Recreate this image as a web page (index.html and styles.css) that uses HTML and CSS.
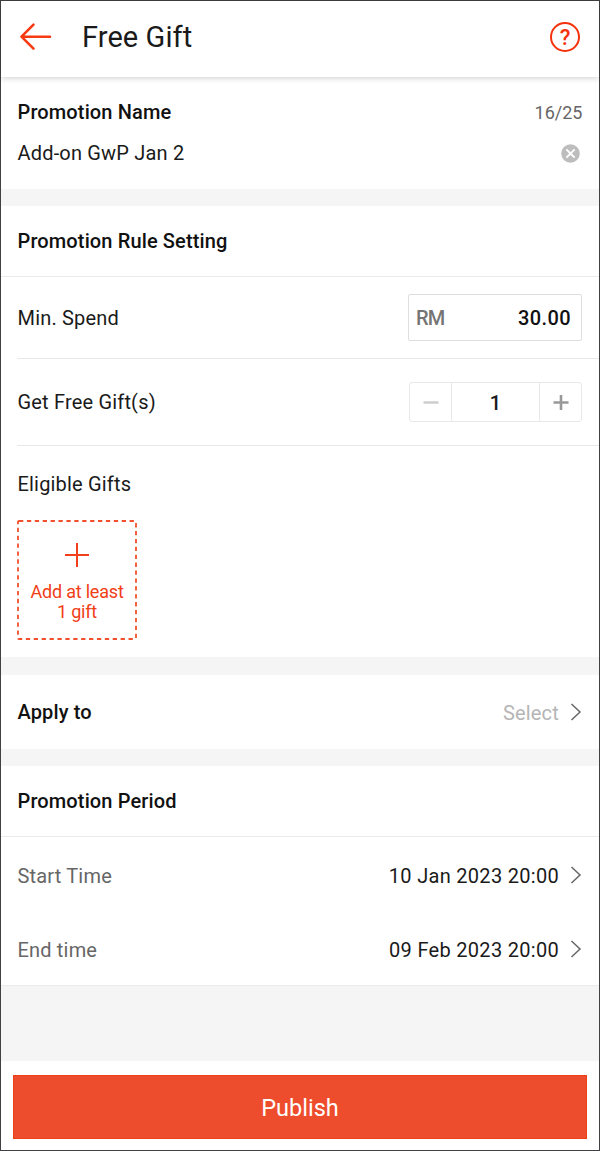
FILE: index.html
```html
<!DOCTYPE html>
<html lang="en">
<head>
    <meta charset="UTF-8">
    <meta name="viewport" content="width=device-width, initial-scale=1.0">
    <title>Free Gift</title>
    <link rel="stylesheet" href="styles.css">
</head>
<body>
    <div class="screen">
        <header>
            <svg class="back" width="34" height="30" viewBox="0 0 34 30">
                <path d="M14.5 2.7 L2.5 14.7 L14.5 26.7 M2.5 14.7 H31"/>
            </svg>
            <h1>Free Gift</h1>
            <div class="help">?</div>
        </header>

        <section class="name">
            <div class="line">
                <h2>Promotion Name</h2>
                <span class="count">16/25</span>
            </div>
            <div class="line">
                <span class="name-value">Add-on GwP Jan 2</span>
                <svg class="clear" width="19" height="19" viewBox="0 0 19 19">
                    <circle cx="9.5" cy="9.5" r="9.3"/>
                    <path d="M5.4 5.4 L13.6 13.6 M13.6 5.4 L5.4 13.6"/>
                </svg>
            </div>
        </section>

        <section class="rules">
            <div class="title"><h2>Promotion Rule Setting</h2></div>
            <div class="row spend">
                <span class="spend-label">Min. Spend</span>
                <div class="money">
                    <span class="currency">RM</span>
                    <span class="amount">30.00</span>
                </div>
            </div>
            <div class="row gifts">
                <span class="gifts-label">Get Free Gift(s)</span>
                <div class="stepper">
                    <div class="step minus"><svg width="16" height="16" viewBox="0 0 16 16"><path d="M0.5 8.5 H15.5"/></svg></div>
                    <div class="number">1</div>
                    <div class="step plus"><svg width="16" height="16" viewBox="0 0 16 16"><path d="M0.5 8.5 H15.5 M8 1 V16"/></svg></div>
                </div>
            </div>
            <div class="eligible">
                <p class="eligible-label">Eligible Gifts</p>
                <div class="add-gift">
                    <svg class="dashes" width="120" height="120" viewBox="0 0 120 120"><rect x="1" y="1" width="118" height="118" rx="1"/></svg>
                    <svg class="add-icon" width="24" height="24" viewBox="0 0 24 24"><path d="M0 12 H24 M12 0 V24"/></svg>
                    <span class="add-text">Add at least<br>1 gift</span>
                </div>
            </div>
        </section>

        <section class="apply">
            <h2>Apply to</h2>
            <span class="select">Select</span>
            <svg class="arrow" width="12" height="18" viewBox="0 0 12 18"><path d="M1.5 1 L10 9 L1.5 17"/></svg>
        </section>

        <section class="period">
            <div class="title"><h2>Promotion Period</h2></div>
            <div class="time">
                <span class="start">Start Time</span>
                <span class="date">10 Jan 2023 20:00</span>
                <svg class="arrow" width="12" height="18" viewBox="0 0 12 18"><path d="M1.5 1 L10 9 L1.5 17"/></svg>
            </div>
            <div class="time">
                <span class="end">End time</span>
                <span class="date">09 Feb 2023 20:00</span>
                <svg class="arrow" width="12" height="18" viewBox="0 0 12 18"><path d="M1.5 1 L10 9 L1.5 17"/></svg>
            </div>
        </section>

        <footer>
            <button class="publish">Publish</button>
        </footer>
    </div>
</body>
</html>
```
FILE: styles.css
```css
* {
    box-sizing: border-box;
}
body {
    margin: 0;
    font-family: Roboto, "Liberation Sans", sans-serif;
    font-size: 20px;
    line-height: 24px;
    letter-spacing: 0.18px;
    color: #1a1a1a;
}
h1, h2, p {
    margin: 0;
}
h2 {
    font-size: 20px;
    font-weight: 500;
    letter-spacing: 0.13px;
    color: #111;
}
svg {
    display: block;
    fill: none;
}
.screen {
    display: flex;
    flex-direction: column;
    height: 1151px;
    border: 1px solid #414042;
    background-color: #f5f5f5;
}
header {
    display: flex;
    align-items: center;
    height: 76px;
    padding: 0 19px 4px 18px;
    background-color: #fff;
    box-shadow: 0 1px 6px rgba(0, 0, 0, 0.2);
    position: relative;
}
.back {
    stroke: #f63a12;
    stroke-width: 2.6;
    stroke-linecap: round;
    stroke-linejoin: round;
}
h1 {
    flex: 1;
    margin-left: 29px;
    padding-bottom: 1px;
    font-size: 29px;
    font-weight: 400;
    line-height: 36px;
    letter-spacing: 0.08px;
}
.help {
    width: 30px;
    height: 30px;
    border: 2px solid #f4320c;
    border-radius: 50%;
    color: #f4320c;
    font-size: 22px;
    font-weight: 500;
    line-height: 27px;
    letter-spacing: 0;
    text-align: center;
}
section {
    margin-bottom: 17px;
    background-color: #fff;
}
.name {
    height: 112px;
    padding: 23px 16.5px 0;
}
.line {
    display: flex;
    justify-content: space-between;
    align-items: center;
    height: 24px;
    margin-bottom: 17px;
}
.count {
    padding-top: 1px;
    font-size: 18px;
    letter-spacing: 0;
    color: #666;
}
.clear {
    margin-right: 2.5px;
}
.clear circle {
    fill: #bdbdbd;
}
.clear path {
    stroke: #fff;
    stroke-width: 2;
}
.rules {
    height: 451px;
    margin-bottom: 18px;
}
.title {
    display: flex;
    align-items: center;
    height: 71px;
    padding: 0 16.5px 1px;
    border-bottom: 1px solid #ebebeb;
}
.row {
    display: flex;
    justify-content: space-between;
    align-items: center;
    margin-left: 16px;
    padding-right: 17px;
    border-bottom: 1px solid #e8e8e8;
}
.row > span {
    margin-left: 0.5px;
}
.spend {
    height: 82px;
}
.gifts {
    height: 87px;
}
.money {
    display: flex;
    justify-content: space-between;
    align-items: center;
    width: 174px;
    height: 47px;
    padding: 0 10px 0 7px;
    border: 1px solid #dedede;
    border-radius: 2px;
    font-weight: 500;
}
.currency {
    color: #757575;
    letter-spacing: -0.8px;
}
.amount {
    color: #111;
    letter-spacing: 0.4px;
}
.stepper {
    display: flex;
    width: 173px;
    height: 40px;
    border: 1px solid #e8e8e8;
    border-radius: 3px;
}
.step {
    display: flex;
    justify-content: center;
    align-items: center;
    width: 41px;
}
.minus path {
    stroke: #ccc;
    stroke-width: 2.4;
}
.plus path {
    stroke: #999;
    stroke-width: 2.6;
}
.number {
    flex: 1;
    border: 1px solid #e8e8e8;
    border-width: 0 1px;
    font-weight: 500;
    line-height: 40px;
    text-align: center;
}
.eligible {
    padding: 26px 16px 0;
}
.eligible-label {
    margin-left: 0.5px;
}
.add-gift {
    display: flex;
    flex-direction: column;
    align-items: center;
    width: 120px;
    height: 120px;
    margin-top: 24px;
    padding-top: 23px;
    color: #f13e17;
    font-size: 18px;
    line-height: 20px;
    letter-spacing: -0.2px;
    text-align: center;
    position: relative;
}
.dashes {
    position: absolute;
    top: 0;
    left: 0;
    stroke: #f2502d;
    stroke-width: 1.8;
    stroke-dasharray: 4.3 3.6;
}
.add-icon {
    margin-bottom: 15px;
    stroke: #f2401c;
    stroke-width: 2;
}
.apply {
    display: flex;
    align-items: center;
    height: 74px;
    padding: 0 17.5px 0 16.5px;
}
.select {
    margin-left: auto;
    padding-top: 2px;
    color: #b5b5b5;
}
.arrow {
    margin-left: 10.5px;
    stroke: #666;
    stroke-width: 1.5;
}
.period {
    height: 220px;
    margin-bottom: 0;
    border-bottom: 1px solid #ebebeb;
}
.time {
    display: flex;
    align-items: center;
    height: 74px;
    padding: 2px 17.5px 0 16.5px;
}
.start, .end {
    flex: 1;
    padding-top: 1px;
    color: #666;
}
.date {
    padding-top: 1px;
    letter-spacing: 0.3px;
}
footer {
    height: 89px;
    margin-top: auto;
    padding: 13.5px 12px 0;
    background-color: #fff;
}
.publish {
    display: block;
    width: 100%;
    height: 64px;
    padding: 3px 0 0;
    border: 1px solid #ee3f1b;
    background-color: #ee4d2d;
    color: #fff;
    font-family: inherit;
    font-size: 23.5px;
}
```
